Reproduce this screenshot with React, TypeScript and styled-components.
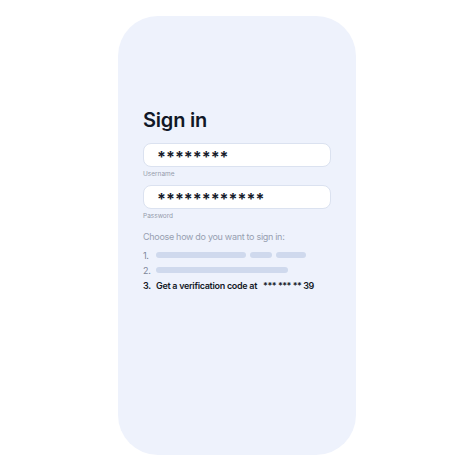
import styled, { createGlobalStyle } from 'styled-components'

const GlobalStyle = createGlobalStyle`
  html, body {
    margin: 0;
    padding: 0;
    background: #ffffff;
    font-family: Inter, "Noto Sans", sans-serif;
  }
`

const fields = [
  { value: '********', label: 'Username' },
  { value: '************', label: 'Password' },
]

export default function App() {
  return (
    <>
      <GlobalStyle />
      <Page>
        <Phone>
          <Title>Sign in</Title>
          {fields.map((f) => (
            <Field key={f.label}>
              <Input>{f.value}</Input>
              <Label>{f.label}</Label>
            </Field>
          ))}
          <Prompt>Choose how do you want to sign in:</Prompt>
          <Options>
            <Option>
              <Num>1.</Num>
              <Bar $w={90} />
              <Bar $w={22} />
              <Bar $w={30} />
            </Option>
            <Option>
              <Num>2.</Num>
              <Bar $w={132} />
            </Option>
            <Option $strong>
              <Num>3.</Num>
              <span>Get a verification code at</span>
              <Masked>*** *** ** 39</Masked>
            </Option>
          </Options>
        </Phone>
      </Page>
    </>
  )
}

const Page = styled.div`
  display: flex;
  justify-content: center;
  padding-top: 16px;
`

const Phone = styled.div`
  width: 238px;
  height: 439px;
  box-sizing: border-box;
  padding: 92px 25px 0;
  background: #eef2fc;
  border-radius: 40px;
  display: flex;
  flex-direction: column;
`

const Title = styled.h1`
  margin: 0 0 11px;
  font-size: 20px;
  line-height: 24px;
  font-weight: 600;
  color: #111827;
  letter-spacing: -0.2px;
`

const Field = styled.div`
  display: flex;
  flex-direction: column;
  margin-bottom: 6px;
`

const Input = styled.div`
  height: 24px;
  box-sizing: border-box;
  background: #ffffff;
  border: 1px solid #dbe2f0;
  border-radius: 8px;
  padding: 4px 13px 0;
  display: flex;
  align-items: center;
  font-size: 16px;
  font-weight: 700;
  color: #161b2b;
  letter-spacing: 0;
  line-height: 1;
`

const Label = styled.div`
  margin-top: 3px;
  font-size: 6.5px;
  line-height: 9px;
  color: #959cab;
`

const Prompt = styled.div`
  margin-top: 4px;
  font-size: 9px;
  line-height: 12px;
  color: #979fb1;
  letter-spacing: -0.3px;
`

const Options = styled.div`
  display: flex;
  flex-direction: column;
  gap: 3px;
  margin-top: 6px;
`

const Option = styled.div<{ $strong?: boolean }>`
  display: flex;
  align-items: center;
  gap: 4px;
  height: 12px;
  white-space: nowrap;
  font-size: 9px;
  font-weight: ${(p) => (p.$strong ? 600 : 400)};
  color: ${(p) => (p.$strong ? '#151a28' : '#7d8699')};
  letter-spacing: -0.3px;
`

const Num = styled.span`
  width: 9px;
`

const Bar = styled.span<{ $w: number }>`
  width: ${(p) => p.$w}px;
  height: 6px;
  border-radius: 3px;
  background: #cfd9ed;
`

const Masked = styled.span`
  margin-left: 2px;
  letter-spacing: -0.5px;
`
